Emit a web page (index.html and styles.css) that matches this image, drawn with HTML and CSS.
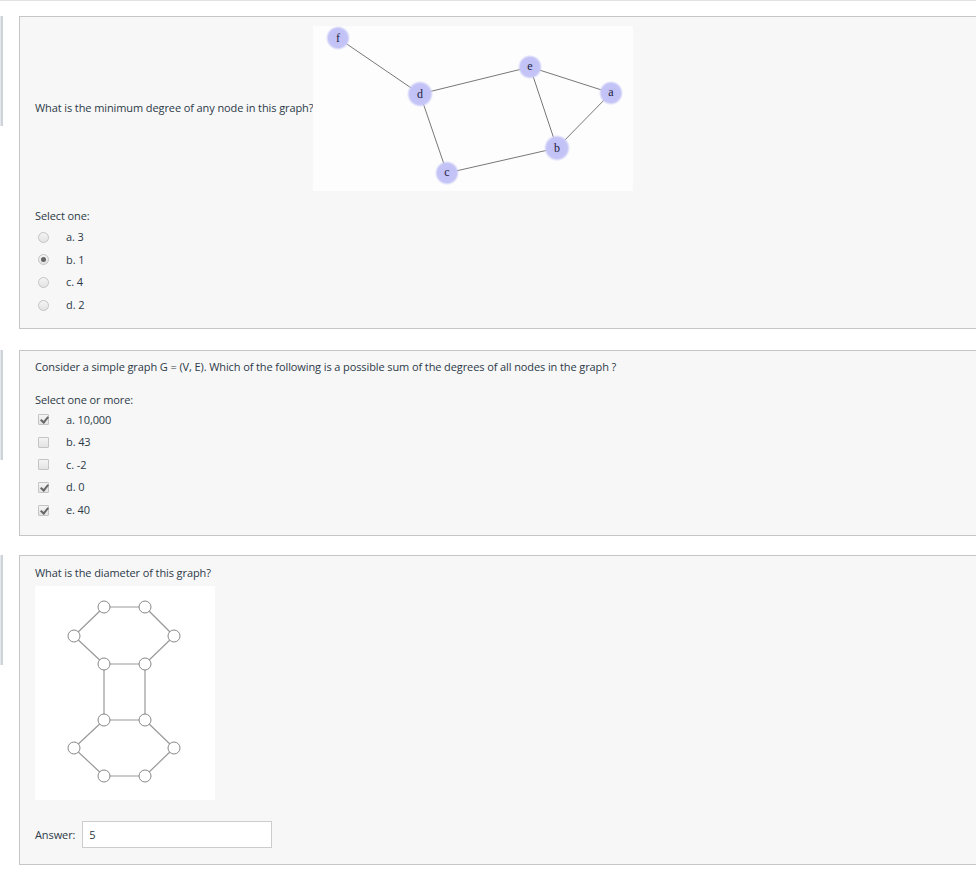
FILE: index.html
```html
<!DOCTYPE html>
<html lang="en">

<head>
    <meta charset="UTF-8">
    <meta name="viewport" content="width=device-width, initial-scale=1.0">
    <title>Quiz</title>
    <link rel="stylesheet" href="styles.css">
</head>

<body>
    <div class="page">
        <!-- Question 1 -->
        <div class="que">
            <div class="info"></div>
            <div class="content">
                <div class="qtext">
                    <span>What is the minimum degree of any node in this graph?</span>
                    <svg class="graph1" width="320" height="165" viewBox="0 0 320 165">
                        <defs>
                            <radialGradient id="node">
                                <stop offset="0" stop-color="#c0c0f6"/>
                                <stop offset="0.8" stop-color="#c4c4f7"/>
                                <stop offset="1" stop-color="#d8d8fa" stop-opacity="0.2"/>
                            </radialGradient>
                        </defs>
                        <rect width="320" height="165" fill="#fdfdfd"/>
                        <g stroke="#555" stroke-width="0.8">
                            <line x1="25" y1="12" x2="107" y2="68"/>
                            <line x1="107" y1="68" x2="217" y2="41"/>
                            <line x1="217" y1="41" x2="298" y2="67"/>
                            <line x1="217" y1="41" x2="244" y2="122"/>
                            <line x1="298" y1="67" x2="244" y2="122"/>
                            <line x1="107" y1="68" x2="134" y2="147"/>
                            <line x1="134" y1="147" x2="244" y2="122"/>
                        </g>
                        <g fill="url(#node)">
                            <circle cx="25" cy="12" r="12"/>
                            <circle cx="107" cy="68" r="13"/>
                            <circle cx="217" cy="41" r="12"/>
                            <circle cx="298" cy="67" r="12"/>
                            <circle cx="244" cy="122" r="13"/>
                            <circle cx="134" cy="147" r="12"/>
                        </g>
                        <g class="lbl" text-anchor="middle">
                            <text x="25" y="16">f</text>
                            <text x="107" y="72">d</text>
                            <text x="217" y="44">e</text>
                            <text x="298" y="70">a</text>
                            <text x="244" y="126">b</text>
                            <text x="134" y="150">c</text>
                        </g>
                    </svg>
                </div>
                <div class="ablock">
                    <div class="prompt">Select one:</div>
                    <div class="answer">
                        <label class="opt"><input type="radio" name="q1"> a. 3</label>
                        <label class="opt"><input type="radio" name="q1" checked> b. 1</label>
                        <label class="opt"><input type="radio" name="q1"> c. 4</label>
                        <label class="opt"><input type="radio" name="q1"> d. 2</label>
                    </div>
                </div>
            </div>
        </div>

        <!-- Question 2 -->
        <div class="que">
            <div class="info"></div>
            <div class="content q2">
                <div class="qtext">Consider a simple graph G = (V, E). Which of the following is a possible sum of the degrees of all nodes in the graph ?</div>
                <div class="ablock wide">
                    <div class="prompt">Select one or more:</div>
                    <div class="answer">
                        <label class="opt"><input type="checkbox" checked> a. 10,000</label>
                        <label class="opt"><input type="checkbox"> b. 43</label>
                        <label class="opt"><input type="checkbox"> c. -2</label>
                        <label class="opt"><input type="checkbox" checked> d. 0</label>
                        <label class="opt"><input type="checkbox" checked> e. 40</label>
                    </div>
                </div>
            </div>
        </div>

        <!-- Question 3 -->
        <div class="que">
            <div class="info"></div>
            <div class="content">
                <div class="qtext">What is the diameter of this graph?</div>
                <svg class="graph2" width="180" height="214" viewBox="0 0 180 214">
                    <rect width="180" height="214" fill="#fff"/>
                    <g stroke="#999" stroke-width="1.2">
                        <line x1="69" y1="21" x2="110" y2="21"/>
                        <line x1="69" y1="21" x2="39" y2="50"/>
                        <line x1="110" y1="21" x2="139" y2="50"/>
                        <line x1="39" y1="50" x2="69" y2="78"/>
                        <line x1="139" y1="50" x2="110" y2="78"/>
                        <line x1="69" y1="78" x2="110" y2="78"/>
                        <line x1="69" y1="78" x2="69" y2="134"/>
                        <line x1="110" y1="78" x2="110" y2="134"/>
                        <line x1="69" y1="134" x2="110" y2="134"/>
                        <line x1="69" y1="134" x2="39" y2="162"/>
                        <line x1="110" y1="134" x2="139" y2="162"/>
                        <line x1="39" y1="162" x2="69" y2="190"/>
                        <line x1="139" y1="162" x2="110" y2="190"/>
                        <line x1="69" y1="190" x2="110" y2="190"/>
                    </g>
                    <g fill="#fff" stroke="#888" stroke-width="1">
                        <circle cx="69" cy="21" r="6"/>
                        <circle cx="110" cy="21" r="6"/>
                        <circle cx="39" cy="50" r="6"/>
                        <circle cx="139" cy="50" r="6"/>
                        <circle cx="69" cy="78" r="6"/>
                        <circle cx="110" cy="78" r="6"/>
                        <circle cx="69" cy="134" r="6"/>
                        <circle cx="110" cy="134" r="6"/>
                        <circle cx="39" cy="162" r="6"/>
                        <circle cx="139" cy="162" r="6"/>
                        <circle cx="69" cy="190" r="6"/>
                        <circle cx="110" cy="190" r="6"/>
                    </g>
                </svg>
                <div class="answer-row">
                    <span>Answer:</span>
                    <input type="text" class="answer-input" value="5">
                </div>
            </div>
        </div>
    </div>
</body>

</html>
```

FILE: styles.css
```css
html {
    border-top: 1px solid #e2e2e2;
}

body {
    margin: 0;
    padding: 0;
    background-color: #fff;
    font-family: "Open Sans", "Liberation Sans", sans-serif;
    font-size: 11px;
    letter-spacing: -0.1px;
    color: #2c3a48;
    overflow-x: hidden;
}

* {
    box-sizing: border-box;
}

.page {
    padding-top: 15px;
}

/* One question */
.que {
    display: flex;
    align-items: flex-start;
    margin-bottom: 21px;
}

.que:nth-child(2) {
    margin-bottom: 19px;
}

/* Left info block, mostly off screen */
.info {
    width: 3px;
    height: 110px;
    background-color: #e4e8ec;
    border-right: 2px solid #cdd3d9;
    flex: none;
}

.content {
    flex: 1;
    margin-left: 16px;
    margin-right: -20px;
    background-color: #f7f7f7;
    border: 1px solid #c6c6c6;
    padding: 7px 15px 12px;
    line-height: 20px;
}

.content.q2 {
    padding-top: 6px;
    padding-bottom: 13px;
}

.qtext {
    display: flex;
    align-items: center;
}

.graph1 {
    display: block;
    margin-top: 2px;
    letter-spacing: 0;
}

.graph1 .lbl {
    font-family: "Liberation Serif", serif;
    font-size: 12px;
    fill: #22223a;
}

.ablock {
    margin-top: 15px;
}

.ablock.wide {
    margin-top: 13px;
}

.answer {
    display: flex;
    flex-direction: column;
}

.wide .answer {
    margin-top: -2px;
    margin-bottom: 1px;
}

.opt {
    display: flex;
    align-items: center;
    height: 22.6px;
}

/* Old style radios and checkboxes */
.opt input {
    -webkit-appearance: none;
    appearance: none;
    width: 11px;
    height: 11px;
    margin: 0 17px 0 3px;
    border: 1px solid #c4c4c4;
    background: linear-gradient(#f4f4f4, #e3e3e3);
    position: relative;
}

.opt input[type="radio"] {
    border-radius: 50%;
}

.opt input[type="checkbox"] {
    border-radius: 1px;
}

.opt input[type="radio"]:checked::after {
    content: "";
    position: absolute;
    left: 2px;
    top: 2px;
    width: 5px;
    height: 5px;
    border-radius: 50%;
    background-color: #666;
}

.opt input[type="checkbox"]:checked::after {
    content: "";
    position: absolute;
    left: 3px;
    top: 0px;
    width: 3px;
    height: 6px;
    border: solid #666;
    border-width: 0 2px 2px 0;
    transform: rotate(40deg);
}

.graph2 {
    display: block;
    margin-top: 3px;
}

.answer-row {
    display: flex;
    align-items: center;
    margin-top: 21px;
    margin-bottom: 4px;
}

.answer-input {
    width: 190px;
    height: 27px;
    margin-left: 7px;
    border: 1px solid #ccc;
    background-color: #fff;
    font-family: inherit;
    font-size: 11px;
    color: #2c3a48;
    padding: 0 6px;
}
```
